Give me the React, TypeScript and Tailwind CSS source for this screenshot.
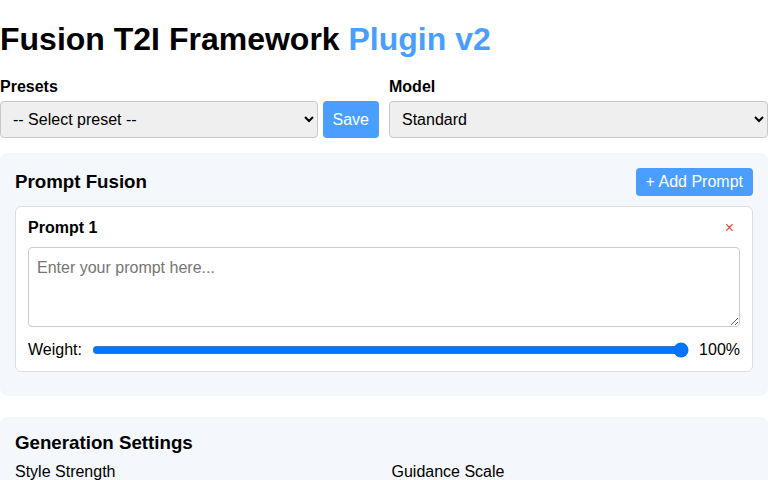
import React from "react";

export default function App() {
  return (
    <div className="bg-white text-black min-h-screen" style={{ fontFamily: '"Liberation Sans", Arial, sans-serif' }}>
      <h1 className="text-[32px] font-bold leading-[37px] pt-[21px] mb-[20px]">
        Fusion T2I Framework <span className="text-[#4a9eff]">Plugin v2</span>
      </h1>
      <div className="grid grid-cols-2 gap-[10px] mb-[15px]">
        <div className="flex flex-col">
          <label className="font-bold text-[16px] leading-[18px] mb-[5px]">Presets</label>
          <div className="flex gap-[5px]">
            <select className="flex-1 h-[37px] px-[8px] text-[16px] bg-[#efefef] border border-[#c8c8c8] rounded-[4px]">
              <option>-- Select preset --</option>
            </select>
            <button className="h-[37px] px-[10px] bg-[#4a9eff] text-white text-[16px] rounded-[4px]">Save</button>
          </div>
        </div>
        <div className="flex flex-col">
          <label className="font-bold text-[16px] leading-[18px] mb-[5px]">Model</label>
          <select className="h-[37px] px-[8px] text-[16px] bg-[#efefef] border border-[#c8c8c8] rounded-[4px]">
            <option>Standard</option>
          </select>
        </div>
      </div>

      <div className="bg-[#f4f7fc] rounded-[8px] p-[15px] pb-[24px] mb-[21px]">
        <div className="flex items-center justify-between mb-[10px]">
          <h3 className="text-[18.72px] font-bold leading-[22px]">Prompt Fusion</h3>
          <button className="h-[28px] px-[10px] bg-[#4a9eff] text-white text-[16px] rounded-[4px]">+ Add Prompt</button>
        </div>
        <div className="bg-white border border-[#dddddd] rounded-[6px] p-[12px]">
          <div className="flex items-center justify-between mb-[10px]">
            <span className="font-bold text-[16px] leading-[18px]">Prompt 1</span>
            <button className="text-[#e74c3c] text-[16px] leading-[18px] px-[6px]">×</button>
          </div>
          <textarea
            className="block w-full h-[80px] border border-[#cccccc] rounded-[4px] p-[8px] text-[16px] placeholder:text-[#757575] resize-y"
            placeholder="Enter your prompt here..."
          />
          <div className="flex items-center gap-[10px] mt-[14px] h-[18px]">
            <span className="text-[16px]">Weight:</span>
            <input type="range" min={0} max={100} defaultValue={100} className="flex-1" />
            <span className="text-[16px]">100%</span>
          </div>
        </div>
      </div>

      <div className="bg-[#f4f7fc] rounded-[8px] p-[15px]">
        <h3 className="text-[18.72px] font-bold leading-[22px] mb-[9px]">Generation Settings</h3>
        <div className="grid grid-cols-2 gap-[15px]">
          <div className="text-[16px] leading-[18px]">Style Strength</div>
          <div className="text-[16px] leading-[18px]">Guidance Scale</div>
        </div>
        <div className="h-[80px]" />
      </div>
    </div>
  );
}
